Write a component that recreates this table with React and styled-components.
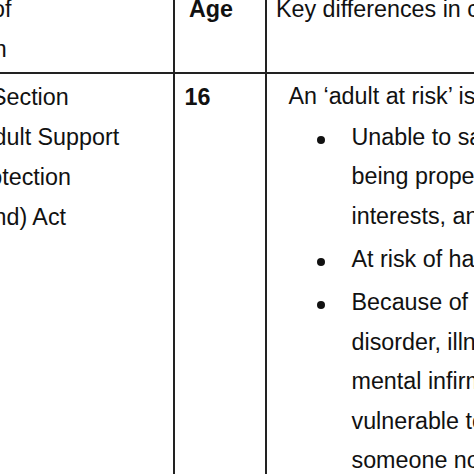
import React from "react";
import styled, { createGlobalStyle } from "styled-components";

const Global = createGlobalStyle`
  html, body {
    margin: 0;
    padding: 0;
    width: 474px;
    height: 474px;
    overflow: hidden;
    background: #ffffff;
  }
  body {
    font-family: "Liberation Sans", Arial, Helvetica, sans-serif;
    color: #111111;
  }
`;

const Table = styled.div`
  display: grid;
  grid-template-columns: 175px 92px 700px;
  margin-top: -11px;
  font-size: 23.3px;
`;

const Cell = styled.div`
  box-sizing: border-box;
  min-width: 0;
  border-right: ${(p) => (p.$divider ? "2px solid #222" : "none")};
  border-bottom: ${(p) => (p.$head ? "2px solid #222" : "none")};
  padding: ${(p) => (p.$head ? "0 0 3px" : "3px 0 0")};
  padding-left: ${(p) => p.$pad || 0}px;
`;

const Line = styled.div`
  line-height: ${(p) => p.$lh || 40}px;
  white-space: nowrap;
  margin-left: ${(p) => p.$shift || 0}px;
  font-weight: ${(p) => (p.$bold ? 700 : 400)};
`;

const Intro = styled.div`
  line-height: 39.6px;
  white-space: nowrap;
  margin-left: 12.5px;
  margin-bottom: 1px;
`;

const List = styled.div`
  display: flex;
  flex-direction: column;
  gap: 3.5px;
  margin-left: 12.5px;
`;

const Item = styled.div`
  display: grid;
  grid-template-columns: 63px auto;
`;

const Dot = styled.span`
  display: block;
  width: 8px;
  height: 8px;
  border-radius: 50%;
  background: #111;
  margin: 18.5px 0 0 28px;
`;

const ItemText = styled.div`
  line-height: 39.6px;
  white-space: nowrap;
`;

const bullets = [
  ["Unable to safeguard their own well-", "being property, rights or other", "interests, and;"],
  ["At risk of harm, and;"],
  [
    "Because of being affected by",
    "disorder, illness or physical or",
    "mental infirmity, are more",
    "vulnerable to being harmed than",
    "someone not so affected",
  ],
];

export default function App() {
  return (
    <>
      <Global />
      <Table>
        <Cell $head $divider>
          <Line $shift={-65}>Type of</Line>
          <Line $shift={-97}>legislation</Line>
        </Cell>
        <Cell $head $divider $pad={14}>
          <Line $bold>Age</Line>
        </Cell>
        <Cell $head $pad={9}>
          <Line>Key differences in criteria</Line>
        </Cell>

        <Cell $divider>
          <Line $shift={-9}>Section</Line>
          <Line $shift={-22}>Adult Support</Line>
          <Line $shift={-34}>Protection</Line>
          <Line $shift={-79}>(Scotland) Act</Line>
        </Cell>
        <Cell $divider $pad={9.5}>
          <Line $bold>16</Line>
        </Cell>
        <Cell $pad={9}>
          <Intro>An ‘adult at risk’ is an adult who is:</Intro>
          <List>
            {bullets.map((lines, i) => (
              <Item key={i}>
                <Dot />
                <div>
                  {lines.map((t, j) => (
                    <ItemText key={j}>{t}</ItemText>
                  ))}
                </div>
              </Item>
            ))}
          </List>
        </Cell>
      </Table>
    </>
  );
}
